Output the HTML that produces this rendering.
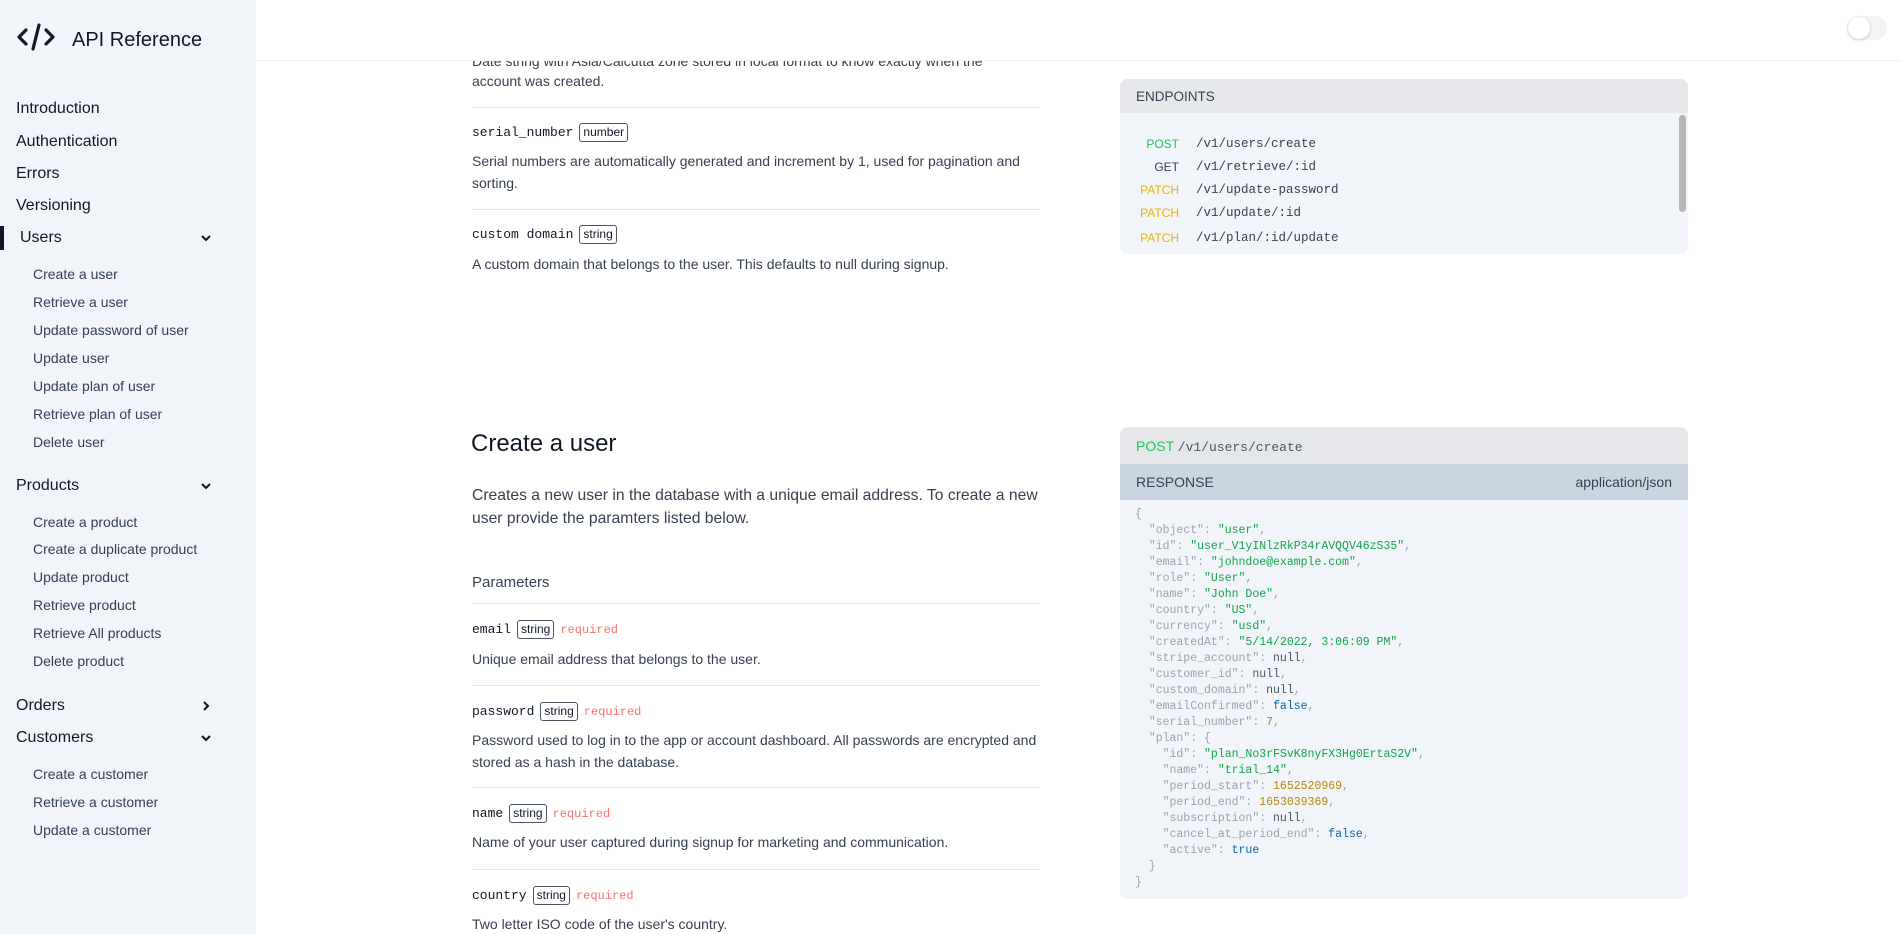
<!DOCTYPE html>
<html><head><meta charset="utf-8"><style>
*{margin:0;padding:0;box-sizing:border-box}
body{width:1902px;height:934px;overflow:hidden;background:#fff;font-family:"Liberation Sans",sans-serif;position:relative;color:#1f2937}
.a{position:absolute;white-space:nowrap}
#side{position:absolute;left:0;top:0;width:256px;height:934px;background:#f1f4f9}
.n{position:absolute;left:16px;font-size:16px;line-height:20px;color:#111827;font-weight:500}
.s{position:absolute;left:33px;font-size:14px;line-height:18px;color:#334155}
.ch{position:absolute;left:200px;width:12px;height:12px}
#hdr{position:absolute;left:256px;top:0;right:0;height:61px;background:#fff;border-bottom:1px solid #f1f3f6;z-index:2}
.m{font-family:"Liberation Mono",monospace}
.p{position:absolute;left:472px;font-size:14px;line-height:20px;color:#374151;white-space:nowrap}
.dv{position:absolute;left:472px;width:568px;height:1px;background:#e5e7eb}
.pn{position:absolute;left:472px;font-size:13px;line-height:22px;color:#111827;white-space:nowrap}
.b{display:inline-block;border:1px solid #4b5563;border-radius:3px;padding:0 3px;font-family:"Liberation Sans",sans-serif;font-size:12px;line-height:17px;margin-left:6px;vertical-align:middle}
.r{color:#f87171;font-size:12px;margin-left:6px}
.box{position:absolute;left:1120px;width:568px;background:#f1f4f8;border-radius:8px;overflow:hidden}
.ep{position:absolute;font-size:12.5px;line-height:18px}
.mt{position:absolute;font-size:12px;line-height:18px}
.j{position:absolute;left:1135px;font-family:"Liberation Mono",monospace;font-size:11.5px;line-height:16px;color:#9ca3af;white-space:pre}
.g{color:#16a34a}.k{color:#4b5563}.bl{color:#0369a1}.y{color:#b8860b}
</style></head><body>
<div id="side">
<svg class="a" style="left:17px;top:22px" width="38" height="30" viewBox="0 0 38 30"><path d="M9 8 L2 15 L9 22 M29 8 L36 15 L29 22 M22 3 L16 27" fill="none" stroke="#111827" stroke-width="3.2" stroke-linecap="round" stroke-linejoin="round"/></svg>
<div class="a" style="left:72px;top:27px;font-size:20px;line-height:26px;color:#111827">API Reference</div>
<div class="n" style="top:99px">Introduction</div>
<div class="n" style="top:132px">Authentication</div>
<div class="n" style="top:164px">Errors</div>
<div class="n" style="top:196px">Versioning</div>
<div class="a" style="left:0;top:226px;width:4px;height:24px;background:#0f172a"></div>
<div class="n" style="top:228px;left:20px">Users</div>
<svg class="ch" style="top:232px" viewBox="0 0 12 12"><path d="M2 4 L6 8 L10 4" fill="none" stroke="#111" stroke-width="2"/></svg>
<div class="s" style="top:265px">Create a user</div>
<div class="s" style="top:293px">Retrieve a user</div>
<div class="s" style="top:321px">Update password of user</div>
<div class="s" style="top:349px">Update user</div>
<div class="s" style="top:377px">Update plan of user</div>
<div class="s" style="top:405px">Retrieve plan of user</div>
<div class="s" style="top:433px">Delete user</div>
<div class="n" style="top:476px">Products</div>
<svg class="ch" style="top:480px" viewBox="0 0 12 12"><path d="M2 4 L6 8 L10 4" fill="none" stroke="#111" stroke-width="2"/></svg>
<div class="s" style="top:513px">Create a product</div>
<div class="s" style="top:540px">Create a duplicate product</div>
<div class="s" style="top:568px">Update product</div>
<div class="s" style="top:596px">Retrieve product</div>
<div class="s" style="top:624px">Retrieve All products</div>
<div class="s" style="top:652px">Delete product</div>
<div class="n" style="top:696px">Orders</div>
<svg class="ch" style="top:700px" viewBox="0 0 12 12"><path d="M4 2 L8 6 L4 10" fill="none" stroke="#111" stroke-width="2"/></svg>
<div class="n" style="top:728px">Customers</div>
<svg class="ch" style="top:732px" viewBox="0 0 12 12"><path d="M2 4 L6 8 L10 4" fill="none" stroke="#111" stroke-width="2"/></svg>
<div class="s" style="top:765px">Create a customer</div>
<div class="s" style="top:793px">Retrieve a customer</div>
<div class="s" style="top:821px">Update a customer</div>
</div>
<div id="hdr"><div class="a" style="right:15px;top:16px;width:40px;height:24px;border-radius:12px;background:#f3f4f6"><div class="a" style="left:1px;top:1px;width:22px;height:22px;border-radius:11px;background:#fff;box-shadow:0 1px 3px rgba(0,0,0,.2)"></div></div></div>

<div class="p" style="top:51px">Date string with Asia/Calcutta zone stored in local format to know exactly when the</div>
<div class="p" style="top:71px">account was created.</div>
<div class="dv" style="top:107px"></div>
<div class="pn m" style="top:122px">serial_number<span class="b">number</span></div>
<div class="p" style="top:151px">Serial numbers are automatically generated and increment by 1, used for pagination and</div>
<div class="p" style="top:173px">sorting.</div>
<div class="dv" style="top:209px"></div>
<div class="pn m" style="top:224px">custom domain<span class="b">string</span></div>
<div class="p" style="top:254px">A custom domain that belongs to the user. This defaults to null during signup.</div>

<div class="a" style="left:471px;top:428px;font-size:24px;line-height:32px;color:#111827;font-weight:500">Create a user</div>
<div class="p" style="top:484px;font-size:15.7px;line-height:24px">Creates a new user in the database with a unique email address. To create a new</div>
<div class="p" style="top:507px;font-size:15.7px;line-height:24px">user provide the paramters listed below.</div>
<div class="p" style="top:573px;font-size:15px;font-weight:500;color:#374151">Parameters</div>
<div class="dv" style="top:603px"></div>
<div class="pn m" style="top:619px">email<span class="b">string</span><span class="r m">required</span></div>
<div class="p" style="top:649px">Unique email address that belongs to the user.</div>
<div class="dv" style="top:685px"></div>
<div class="pn m" style="top:701px">password<span class="b">string</span><span class="r m">required</span></div>
<div class="p" style="top:730px">Password used to log in to the app or account dashboard. All passwords are encrypted and</div>
<div class="p" style="top:752px">stored as a hash in the database.</div>
<div class="dv" style="top:787px"></div>
<div class="pn m" style="top:803px">name<span class="b">string</span><span class="r m">required</span></div>
<div class="p" style="top:832px">Name of your user captured during signup for marketing and communication.</div>
<div class="dv" style="top:869px"></div>
<div class="pn m" style="top:885px">country<span class="b">string</span><span class="r m">required</span></div>
<div class="p" style="top:914px">Two letter ISO code of the user's country.</div>

<div class="box" style="top:79px;height:175px">
<div class="a" style="left:0;top:0;width:568px;height:34px;background:#e5e7eb"></div>
<div class="a" style="left:16px;top:9px;font-size:13.5px;line-height:17px;color:#374151;font-weight:500">ENDPOINTS</div>
<div class="a" style="left:559px;top:36px;width:7px;height:97px;border-radius:4px;background:#b5b5b5"></div>
</div>
<div class="mt" style="top:135px;color:#22c55e;right:723px">POST</div>
<div class="mt" style="top:158px;color:#374151;right:723px">GET</div>
<div class="mt" style="top:181px;color:#eab308;right:723px">PATCH</div>
<div class="mt" style="top:204px;color:#eab308;right:723px">PATCH</div>
<div class="mt" style="top:229px;color:#eab308;right:723px">PATCH</div>
<div class="ep m" style="left:1196px;top:135px;color:#374151">/v1/users/create</div>
<div class="ep m" style="left:1196px;top:158px;color:#374151">/v1/retrieve/:id</div>
<div class="ep m" style="left:1196px;top:181px;color:#374151">/v1/update-password</div>
<div class="ep m" style="left:1196px;top:204px;color:#374151">/v1/update/:id</div>
<div class="ep m" style="left:1196px;top:229px;color:#374151">/v1/plan/:id/update</div>

<div class="box" style="top:427px;height:472px">
<div class="a" style="left:0;top:0;width:568px;height:37px;background:#e5e7eb"></div>
<div class="a" style="left:16px;top:9px;font-size:14px;line-height:20px"><span style="color:#22c55e">POST</span> <span class="m" style="color:#4b5563;font-size:13px">/v1/users/create</span></div>
<div class="a" style="left:0;top:37px;width:568px;height:36px;background:#cbd5e1"></div>
<div class="a" style="left:16px;top:46px;font-size:14px;line-height:18px;color:#374151;font-weight:500">RESPONSE</div>
<div class="a" style="right:16px;top:46px;font-size:14px;line-height:18px;color:#374151;font-weight:500">application/json</div>
</div>
<div class="j" style="top:507px">{</div>
<div class="j" style="top:523px">  "object": <span class="g">"user"</span>,</div>
<div class="j" style="top:539px">  "id": <span class="g">"user_V1yINlzRkP34rAVQQV46zS35"</span>,</div>
<div class="j" style="top:555px">  "email": <span class="g">"johndoe@example.com"</span>,</div>
<div class="j" style="top:571px">  "role": <span class="g">"User"</span>,</div>
<div class="j" style="top:587px">  "name": <span class="g">"John Doe"</span>,</div>
<div class="j" style="top:603px">  "country": <span class="g">"US"</span>,</div>
<div class="j" style="top:619px">  "currency": <span class="g">"usd"</span>,</div>
<div class="j" style="top:635px">  "createdAt": <span class="g">"5/14/2022, 3:06:09 PM"</span>,</div>
<div class="j" style="top:651px">  "stripe_account": <span class="k">null</span>,</div>
<div class="j" style="top:667px">  "customer_id": <span class="k">null</span>,</div>
<div class="j" style="top:683px">  "custom_domain": <span class="k">null</span>,</div>
<div class="j" style="top:699px">  "emailConfirmed": <span class="bl">false</span>,</div>
<div class="j" style="top:715px">  "serial_number": <span class="y">7</span>,</div>
<div class="j" style="top:731px">  "plan": {</div>
<div class="j" style="top:747px">    "id": <span class="g">"plan_No3rFSvK8nyFX3Hg0ErtaS2V"</span>,</div>
<div class="j" style="top:763px">    "name": <span class="g">"trial_14"</span>,</div>
<div class="j" style="top:779px">    "period_start": <span class="y">1652520969</span>,</div>
<div class="j" style="top:795px">    "period_end": <span class="y">1653039369</span>,</div>
<div class="j" style="top:811px">    "subscription": <span class="k">null</span>,</div>
<div class="j" style="top:827px">    "cancel_at_period_end": <span class="bl">false</span>,</div>
<div class="j" style="top:843px">    "active": <span class="bl">true</span></div>
<div class="j" style="top:859px">  }</div>
<div class="j" style="top:875px">}</div>
</body></html>
